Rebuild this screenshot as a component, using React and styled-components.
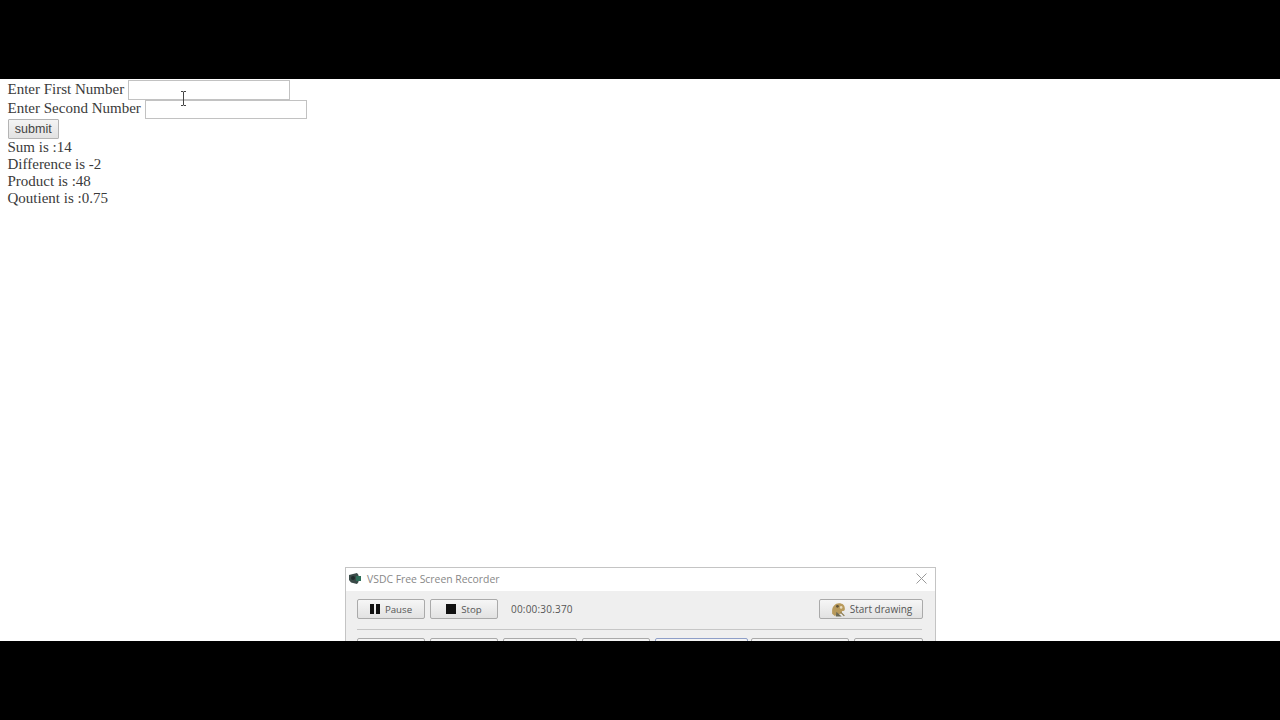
import styled, { createGlobalStyle } from "styled-components";

const GlobalStyle = createGlobalStyle`
  html, body {
    margin: 0;
    padding: 0;
    background: #000;
  }
`;

const results = ["Sum is :14", "Difference is -2", "Product is :48", "Qoutient is :0.75"];
const lowerTabs = [
  { width: 68 },
  { width: 68 },
  { width: 74 },
  { width: 68 },
  { width: 93, active: true },
  { width: 98 },
  { width: 69 },
];

function DrawingIcon() {
  return (
    <svg width="17" height="17" viewBox="0 0 16 16">
      <path d="M2 9c0-4 3-7 6.500-7S14 4 14 7.500c0 1.500-1 2-2.500 2l-1 2.500-3.500 .5L4.500 14 2 12z" fill="#b89a5c" />
      <circle cx="7" cy="5" r="1.300" fill="#5f5238" />
      <circle cx="10.500" cy="6" r="1.200" fill="#e8dcc0" />
      <path d="M6 10l5 4.500H5.500z" fill="#6d6a55" />
      <path d="M10 10.500l3.500 3.500" stroke="#8a7a50" strokeWidth="1.200" />
    </svg>
  );
}

function AppIcon() {
  return (
    <svg width="14" height="13" viewBox="0 0 14 13">
      <path d="M1 3l8-2 1.500 2V10L9 12 3 10.500 1 8z" fill="#3a4a48" />
      <rect x="8" y="4" width="5" height="5" fill="#2f6f5a" />
      <circle cx="5" cy="6" r="2" fill="#1f2a2a" />
    </svg>
  );
}

export default function App() {
  return (
    <>
      <GlobalStyle />
      <Screen>
        <Page>
          <Form>
            <Row>
              <Label>Enter First Number</Label>
              <TextInput />
              <Cursor width="7" height="15" viewBox="0 0 7 15">
                <path d="M1 .5h2l.5 .5.500-.5h2M3.500 1v13M1 14.500h2l.5-.5.500 .5h2" fill="none" stroke="#444" />
              </Cursor>
            </Row>
            <Row>
              <Label>Enter Second Number</Label>
              <TextInput />
            </Row>
            <SubmitButton>submit</SubmitButton>
            {results.map((line) => (
              <Result key={line}>{line}</Result>
            ))}
          </Form>
          <RecorderWindow>
            <TitleBar>
              <AppIcon />
              <Title>VSDC Free Screen Recorder</Title>
              <svg width="11" height="11" viewBox="0 0 11 11">
                <path d="M.5 .5l10 10M10.500 .5l-10 10" stroke="#9a9a9a" fill="none" />
              </svg>
            </TitleBar>
            <Controls>
              <ToolButton $width={68}>
                <PauseGlyph />
                Pause
              </ToolButton>
              <ToolButton $width={68}>
                <StopGlyph />
                Stop
              </ToolButton>
              <Timer>00:00:30.370</Timer>
              <DrawButton>
                <DrawingIcon />
                Start drawing
              </DrawButton>
            </Controls>
            <Divider />
            <LowerRow>
              {lowerTabs.map((tab, i) => (
                <LowerTab key={i} $width={tab.width} $active={tab.active} />
              ))}
            </LowerRow>
          </RecorderWindow>
        </Page>
      </Screen>
    </>
  );
}

const Screen = styled.div`
  width: 1280px;
  height: 720px;
  padding: 79px 0;
  box-sizing: border-box;
  background: #000;
  overflow: hidden;
`;
const Page = styled.div`
  height: 562px;
  background: #fff;
  display: flex;
  flex-direction: column;
  justify-content: space-between;
  overflow: hidden;
`;
const Form = styled.div`
  padding: 1px 0 0 7.5px;
  display: flex;
  flex-direction: column;
  align-items: flex-start;
  font-family: "Liberation Serif", serif;
  font-size: 15px;
  color: #3a3a3a;
`;
const Row = styled.div`
  position: relative;
  width: 320px;
  height: 19.5px;
  display: flex;
  align-items: center;
  gap: 4px;
`;
const Label = styled.span`
  line-height: 17px;
  margin-bottom: 1px;
  white-space: nowrap;
`;
const TextInput = styled.input`
  width: 162px;
  height: 19.5px;
  padding: 0;
  box-sizing: border-box;
  border: 1px solid #c2c2c2;
  background: #fff;
  outline: none;
`;
const Cursor = styled.svg`
  position: absolute;
  z-index: 1;
  left: 172px;
  top: 11px;
`;
const SubmitButton = styled.button`
  width: 51.5px;
  height: 20px;
  padding: 0;
  box-sizing: border-box;
  border: 1px solid #b4b4b4;
  border-radius: 1px;
  background: linear-gradient(#f4f4f4, #e2e2e2);
  font-family: "Liberation Sans", sans-serif;
  font-size: 12.5px;
  color: #444;
`;
const Result = styled.div`
  line-height: 17px;
`;
const RecorderWindow = styled.div`
  align-self: flex-start;
  margin-left: 345px;
  width: 591px;
  height: 74px;
  box-sizing: border-box;
  border: 1px solid #c4c4c4;
  border-bottom: 0;
  background: #efefef;
  overflow: hidden;
  font-family: "Open Sans", "Noto Sans", sans-serif;
  color: #555;
`;
const TitleBar = styled.div`
  height: 21px;
  padding: 0 8px 2px 2px;
  background: #fff;
  display: flex;
  align-items: center;
  gap: 5px;
`;
const Title = styled.span`
  flex: 1;
  font-size: 10.4px;
  color: #888;
`;
const Controls = styled.div`
  height: 36px;
  padding: 0 12px 2px 11px;
  display: flex;
  align-items: center;
  gap: 5px;
  font-size: 9.7px;
`;
const ToolButton = styled.div`
  width: ${(p) => p.$width}px;
  height: 20px;
  box-sizing: border-box;
  border: 1px solid #aaa;
  border-radius: 2px;
  background: linear-gradient(#f6f6f6, #e2e2e2);
  display: flex;
  align-items: center;
  justify-content: center;
  gap: 5px;
`;
const PauseGlyph = styled.span`
  width: 2px;
  height: 10px;
  border-left: 4px solid #111;
  border-right: 4px solid #111;
`;
const StopGlyph = styled.span`
  width: 10px;
  height: 10px;
  background: #111;
`;
const Timer = styled.span`
  margin-left: 8px;
  flex: 1;
  font-size: 10px;
  letter-spacing: 0.2px;
`;
const DrawButton = styled(ToolButton)`
  width: 104px;
  gap: 3px;
  font-size: 10px;
`;
const Divider = styled.div`
  height: 1px;
  margin: 0 13px 0 11px;
  background: #c6c6c6;
`;
const LowerRow = styled.div`
  margin-top: 8px;
  padding-left: 11px;
  display: flex;
  gap: 5px;
`;
const LowerTab = styled.div`
  flex: none;
  width: ${(p) => p.$width}px;
  height: 20px;
  margin-right: ${(p) => (p.$active ? "-2px" : "0")};
  box-sizing: border-box;
  border: 1px solid ${(p) => (p.$active ? "#8f9fc8" : "#aaa")};
  border-radius: 2px;
  background: #f4f4f4;
`;
